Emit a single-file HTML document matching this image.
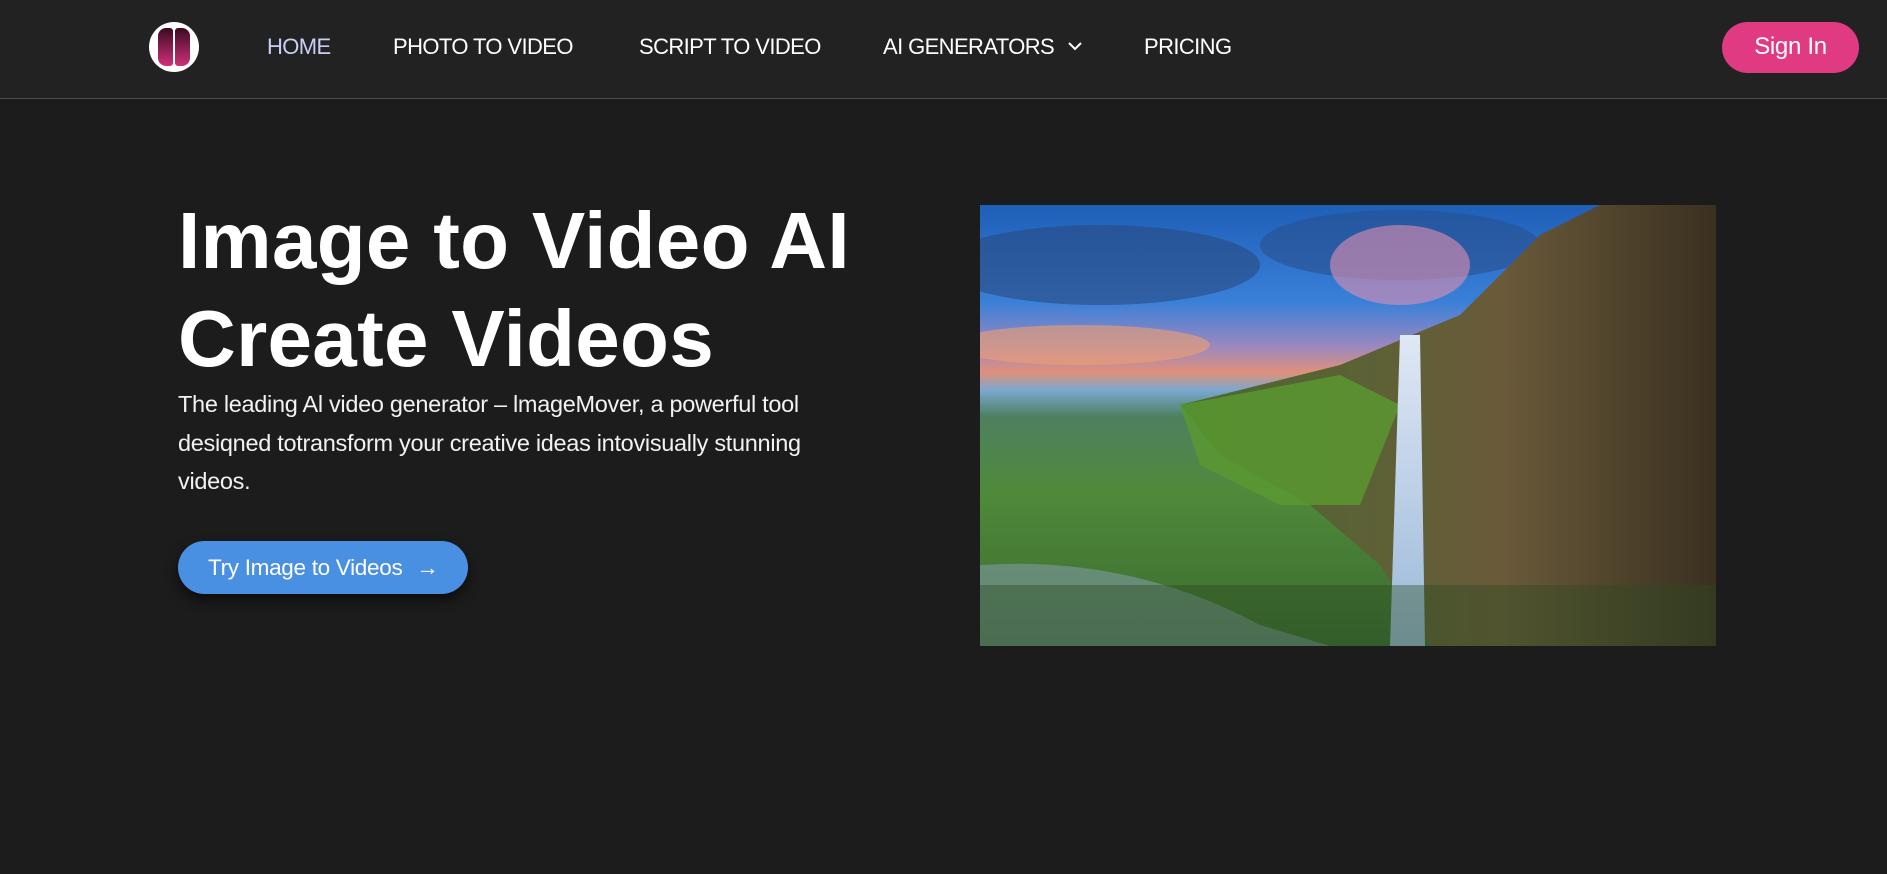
<!DOCTYPE html>
<html><head><meta charset="utf-8"><style>
*{margin:0;padding:0;box-sizing:border-box}
body{width:1887px;height:874px;background:#1c1c1c;font-family:"Liberation Sans",sans-serif;color:#fff;overflow:hidden;position:relative}
.hdr{position:absolute;left:0;top:0;width:1887px;height:99px;background:#222;border-bottom:1px solid #4a4a52}
.nav{position:absolute;top:34px;font-size:22px;color:#fff;letter-spacing:-0.6px;white-space:nowrap}
.logo{position:absolute;left:149px;top:22px;width:50px;height:50px;border-radius:50%;background:#fff;overflow:hidden}
.signin{position:absolute;left:1722px;top:22px;width:137px;height:51px;border-radius:26px;background:#df3a82;color:#fff;font-size:24px;text-align:center;line-height:50px;letter-spacing:-0.3px}
h1{position:absolute;left:178px;top:192px;font-size:80px;line-height:98px;font-weight:bold;letter-spacing:0.3px}
p{position:absolute;left:178px;top:385px;width:700px;font-size:23.5px;line-height:38.5px;color:#f2f2f2;letter-spacing:-0.3px}
.btn{position:absolute;left:178px;top:541px;width:290px;height:53px;border-radius:27px;background:#4a90e2;color:#fff;font-size:22.5px;line-height:53px;padding-left:30px;box-shadow:0 6px 12px rgba(0,0,0,.6);letter-spacing:-0.3px}
.img{position:absolute;left:980px;top:205px;width:736px;height:441px;overflow:hidden;background:linear-gradient(180deg,#1e5fb8 0%,#3a80d8 22%,#9a88c0 32%,#e0907a 38%,#7aa8d0 42%,#4e8060 48%,#4f8a3a 65%,#3a6a30 100%)}
</style></head><body>
<div class="hdr"></div>
<div class="logo"><div style="position:absolute;left:9px;top:6px;width:15px;height:38px;border-radius:8px 3px 3px 8px;background:linear-gradient(#3a0a20,#d0307a)"></div><div style="position:absolute;left:26px;top:6px;width:15px;height:38px;border-radius:3px 8px 8px 3px;background:linear-gradient(#3a0a20,#d0307a)"></div></div>
<div class="nav" style="left:267px;color:#c8cff5">HOME</div>
<div class="nav" style="left:393px">PHOTO TO VIDEO</div>
<div class="nav" style="left:639px">SCRIPT TO VIDEO</div>
<div class="nav" style="left:883px">AI GENERATORS</div>
<svg style="position:absolute;left:1067px;top:40px" width="16" height="12" viewBox="0 0 16 12"><path d="M2 3l6 6 6-6" stroke="#fff" stroke-width="2" fill="none"/></svg>
<div class="nav" style="left:1144px">PRICING</div>
<div class="signin">Sign In</div>
<h1>Image to Video AI<br>Create Videos</h1>
<p>The leading Al video generator – lmageMover, a powerful tool desiqned totransform your creative ideas intovisually stunning videos.</p>
<div class="btn">Try Image to Videos <span style="margin-left:8px">→</span></div>
<div class="img">
<svg width="736" height="441" viewBox="0 0 736 441" style="position:absolute;left:0;top:0">
<defs><linearGradient id="c" x1="0" y1="0" x2="1" y2="0"><stop offset="0" stop-color="#4a6a30"/><stop offset=".6" stop-color="#6a5a3a"/><stop offset="1" stop-color="#3a3020"/></linearGradient>
<linearGradient id="w" x1="0" y1="0" x2="0" y2="1"><stop offset="0" stop-color="#dfe8f5"/><stop offset="1" stop-color="#9ab8d8"/></linearGradient></defs>
<ellipse cx="120" cy="60" rx="160" ry="40" fill="#2a4a80" opacity=".6"/>
<ellipse cx="420" cy="40" rx="140" ry="35" fill="#2a5090" opacity=".6"/>
<ellipse cx="420" cy="60" rx="70" ry="40" fill="#e090b0" opacity=".6"/>
<ellipse cx="100" cy="140" rx="130" ry="20" fill="#f0a070" opacity=".6"/>
<path d="M200 200 L360 160 L480 110 L560 30 L620 0 L736 0 L736 441 L450 441 L400 360 L330 300 L240 250Z" fill="url(#c)"/>
<path d="M200 200 L360 170 L420 200 L380 300 L300 300 L220 260Z" fill="#5a9a30" opacity=".8"/>
<path d="M420 130 L440 130 L445 441 L410 441Z" fill="url(#w)"/>
<path d="M0 360 Q150 350 280 420 L350 441 L0 441Z" fill="#8aa0b8" opacity=".5"/>
<path d="M0 380 L736 380 L736 441 L0 441Z" fill="#2a4a20" opacity=".4"/>
</svg></div>
</body></html>
